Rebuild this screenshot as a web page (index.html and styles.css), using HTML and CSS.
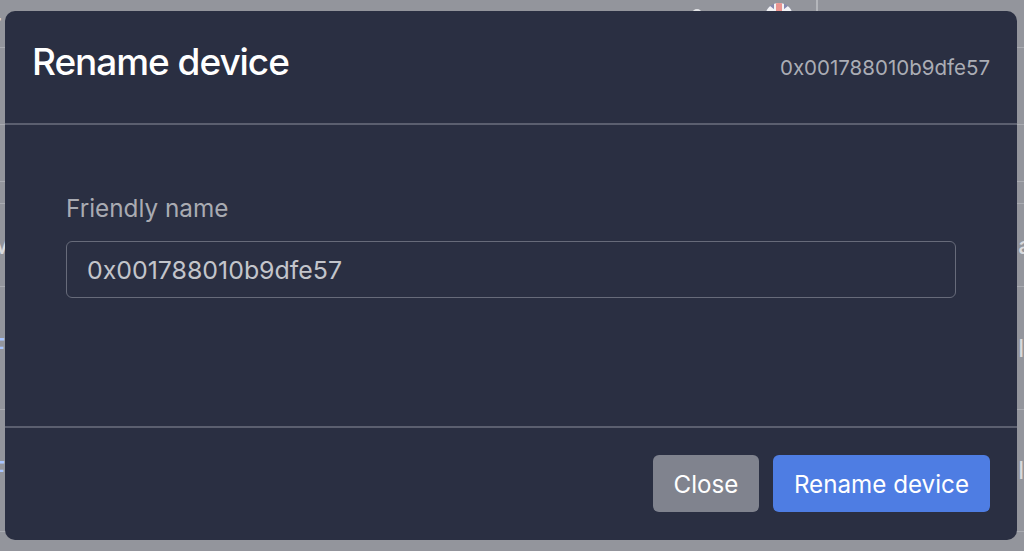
FILE: index.html
```html
<!DOCTYPE html>
<html lang="en">
<head>
  <meta charset="UTF-8" />
  <meta name="viewport" content="width=device-width, initial-scale=1.0"/>
  <title>Rename device</title>
  <link rel="stylesheet" href="styles.css">
</head>
<body>

  <!-- page behind the dialog, only its edges show -->
  <div class="page">
    <div class="row top-row">
      <span class="cell-left">r</span>
      <span class="nav-dot"></span>
      <svg class="flag" width="30" height="30" viewBox="0 0 30 30">
        <defs><clipPath id="flagClip"><circle cx="15" cy="15" r="14"/></clipPath></defs>
        <g clip-path="url(#flagClip)">
          <rect width="30" height="30" fill="#8487ad"/>
          <path d="M0 3 L30 27 M30 3 L0 27" stroke="#f2f2f4" stroke-width="6"/>
          <rect x="10" width="10" height="30" fill="#f2f2f4"/>
          <rect x="12" width="6" height="30" fill="#e9938f"/>
        </g>
      </svg>
      <span class="nav-line"></span>
    </div>
    <div class="row h-77"></div>
    <div class="row h-57"></div>
    <div class="row h-22"></div>
    <div class="row h-83"><span class="cell-left">M</span><span class="cell-right">a</span></div>
    <div class="row h-123"><span class="cell-left link">F</span><span class="cell-right bar">I</span></div>
    <div class="row h-122"><span class="cell-left link">F</span><span class="cell-right bar">I</span></div>
  </div>

  <div class="modal">
    <div class="modal-header">
      <h1>Rename device</h1>
      <small>0x001788010b9dfe57</small>
    </div>
    <div class="modal-body">
      <label for="friendlyName">Friendly name</label>
      <input id="friendlyName" type="text" value="0x001788010b9dfe57">
    </div>
    <div class="modal-footer">
      <button class="btn btn-close">Close</button>
      <button class="btn btn-primary">Rename device</button>
    </div>
  </div>

</body>
</html>
```

FILE: styles.css
```css
* { box-sizing: border-box; margin: 0; padding: 0; }
body {
  font-family: Inter, "Liberation Sans", sans-serif;
  background-color: #93959c;
  width: 1024px;
  height: 551px;
  overflow: hidden;
  position: relative;
}

/* background page */
.page {
  display: flex;
  flex-direction: column;
}
.row {
  display: flex;
  align-items: center;
  justify-content: space-between;
  overflow: hidden;
  border-bottom: 1px solid #a9abb1;
  font-size: 24px;
  color: #d9dade;
}
.top-row {
  height: 48px;
  justify-content: flex-start;
  align-items: flex-start;
}
.h-77 { height: 77px; }
.h-57 { height: 57px; }
.h-22 { height: 22px; }
.h-83 { height: 83px; }
.h-123 { height: 123px; }
.h-122 { height: 122px; }
.cell-left {
  margin-left: -9px;
  font-weight: 500;
}
.top-row .cell-left {
  margin-left: -8px;
  margin-top: 8px;
  width: 12px;
}
.cell-right {
  margin-right: -8px;
  font-weight: 500;
}
.link {
  font-size: 25px;
  color: #a8c4ff;
}
.bar { margin-right: 0; font-weight: 400; width: 6px; color: #d9dade; }
.nav-dot {
  width: 10px;
  height: 10px;
  margin: 9px 0 0 688px;
  border-radius: 50%;
  background-color: #e3e4e7;
}
.flag {
  margin: 2px 0 0 62px;
}
.nav-line {
  width: 2px;
  height: 48px;
  margin-left: 22px;
  background-color: #b4b6bb;
}

/* dialog */
.modal {
  position: absolute;
  left: 5px;
  top: 11px;
  width: 1012px;
  height: 529px;
  display: flex;
  flex-direction: column;
  background-color: #2a2f42;
  border-radius: 10px;
  color: #fff;
}
.modal-header {
  height: 114px;
  display: flex;
  justify-content: space-between;
  align-items: flex-start;
  padding: 28px 27px 0 27px;
  border-bottom: 2px solid #5b5f6f;
}
.modal-header h1 {
  font-size: 37px;
  font-weight: 500;
  line-height: 46px;
  letter-spacing: -1.05px;
}
.modal-header small {
  font-size: 20.5px;
  line-height: 28px;
  margin-top: 15px;
  color: #abadb5;
}
.modal-body {
  flex: 1;
  padding: 67px 61px 0;
}
.modal-body label {
  display: block;
  font-size: 24.3px;
  line-height: 32px;
  color: #a9abb2;
  margin-bottom: 17px;
}
.modal-body input {
  display: block;
  width: 100%;
  height: 57px;
  padding: 0 20px;
  font-family: inherit;
  font-size: 24.9px;
  color: #c3c5cb;
  background-color: transparent;
  border: 1.5px solid #676b7a;
  border-radius: 6px;
}
.modal-footer {
  height: 114px;
  display: flex;
  justify-content: flex-end;
  align-items: flex-start;
  gap: 14px;
  padding: 27px 27px 0 0;
  border-top: 2px solid #5b5f6f;
}
.btn {
  height: 57px;
  padding: 2px 21px 0;
  font-family: inherit;
  font-size: 24.2px;
  color: #fff;
  border: none;
  border-radius: 6px;
  cursor: pointer;
}
.btn-close {
  padding: 2px 20.5px 0;
  background-color: #80838e;
}
.btn-primary { background-color: #4e7de3; }
```
